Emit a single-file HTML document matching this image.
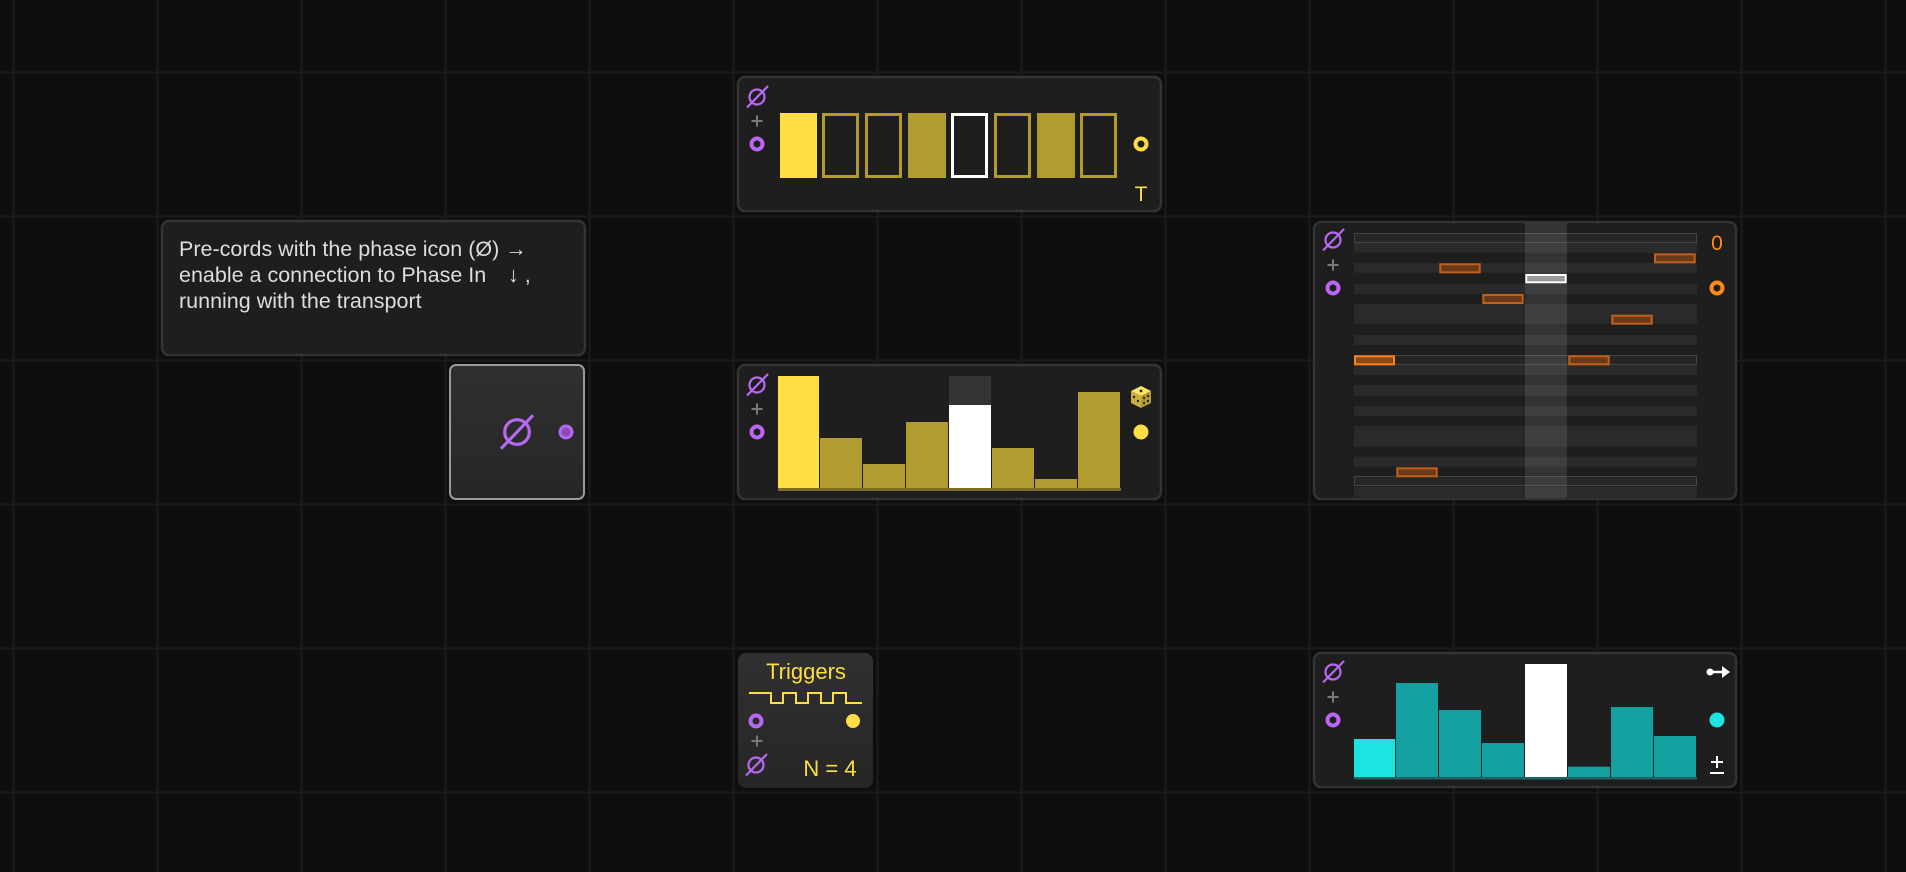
<!DOCTYPE html>
<html><head><meta charset="utf-8"><style>
html,body{margin:0;padding:0;background:#0e0e0e;width:1906px;height:872px;overflow:hidden}
svg{display:block}
</style></head><body>
<svg width="1906" height="872" viewBox="0 0 1906 872" xmlns="http://www.w3.org/2000/svg" font-family="Liberation Sans, sans-serif">
<defs>
<g id="phi"><circle cx="0" cy="0" r="7.5" fill="none" stroke="#b868f0" stroke-width="2.2"/><line x1="-10" y1="10.5" x2="11" y2="-11" stroke="#b868f0" stroke-width="2.2"/></g>
<g id="plus"><line x1="-5.5" y1="0" x2="5.5" y2="0" stroke="#7a7a7a" stroke-width="2"/><line x1="0" y1="-5.5" x2="0" y2="5.5" stroke="#7a7a7a" stroke-width="2"/></g>
<g id="ring"><circle cx="0" cy="0" r="5.5" fill="none" stroke="#b868f0" stroke-width="4"/></g>
<linearGradient id="pg" x1="0" y1="0" x2="0" y2="1"><stop offset="0" stop-color="#303030"/><stop offset="1" stop-color="#262626"/></linearGradient>
</defs>
<rect width="1906" height="872" fill="#0e0e0e"/>
<g stroke="#1c1c1c" stroke-width="2">
<line x1="13.5" y1="0" x2="13.5" y2="872"/><line x1="157.5" y1="0" x2="157.5" y2="872"/><line x1="301.5" y1="0" x2="301.5" y2="872"/><line x1="445.5" y1="0" x2="445.5" y2="872"/><line x1="589.5" y1="0" x2="589.5" y2="872"/><line x1="733.5" y1="0" x2="733.5" y2="872"/><line x1="877.5" y1="0" x2="877.5" y2="872"/><line x1="1021.5" y1="0" x2="1021.5" y2="872"/><line x1="1165.5" y1="0" x2="1165.5" y2="872"/><line x1="1309.5" y1="0" x2="1309.5" y2="872"/><line x1="1453.5" y1="0" x2="1453.5" y2="872"/><line x1="1597.5" y1="0" x2="1597.5" y2="872"/><line x1="1741.5" y1="0" x2="1741.5" y2="872"/><line x1="1885.5" y1="0" x2="1885.5" y2="872"/>
<line x1="0" y1="72.5" x2="1906" y2="72.5"/><line x1="0" y1="216.5" x2="1906" y2="216.5"/><line x1="0" y1="360.5" x2="1906" y2="360.5"/><line x1="0" y1="504.5" x2="1906" y2="504.5"/><line x1="0" y1="648.5" x2="1906" y2="648.5"/><line x1="0" y1="792.5" x2="1906" y2="792.5"/>
</g>

<!-- step sequencer -->
<rect x="738" y="77" width="423" height="134" rx="7" fill="#1e1e1e" stroke="#333" stroke-width="2.5"/>
<use href="#phi" x="757" y="97"/><use href="#plus" x="757" y="121"/><use href="#ring" x="757" y="144"/>
<rect x="780" y="113" width="37" height="65" fill="#ffdd44"/>
<rect x="823.5" y="114.5" width="34" height="62" fill="none" stroke="#b29c32" stroke-width="3"/>
<rect x="866.5" y="114.5" width="34" height="62" fill="none" stroke="#b29c32" stroke-width="3"/>
<rect x="908" y="113" width="38" height="65" fill="#b29c32"/>
<rect x="952.5" y="114.5" width="34" height="62" fill="none" stroke="#ffffff" stroke-width="3"/>
<rect x="995.5" y="114.5" width="34" height="62" fill="none" stroke="#b29c32" stroke-width="3"/>
<rect x="1037" y="113" width="38" height="65" fill="#b29c32"/>
<rect x="1081.5" y="114.5" width="34" height="62" fill="none" stroke="#b29c32" stroke-width="3"/>
<circle cx="1141" cy="144" r="5.5" fill="none" stroke="#ffdd44" stroke-width="4"/>
<text x="1141" y="201" font-size="21" fill="#ffdd44" text-anchor="middle">T</text>

<!-- text panel -->
<rect x="162" y="221" width="423" height="134" rx="7" fill="#1e1e1e" stroke="#333" stroke-width="2.5"/>
<text font-size="21.5" fill="#dddddd"><tspan x="179" y="256">Pre-cords with the phase icon  (Ø) →</tspan><tspan x="179" y="282">enable a connection to Phase In</tspan><tspan x="508" y="282">↓ ,</tspan><tspan x="179" y="308">running with the transport</tspan></text>

<!-- phase box -->
<rect x="450" y="365" width="134" height="134" rx="6" fill="url(#pg)" stroke="#9a9a9a" stroke-width="2"/>
<g transform="translate(517,432) scale(1.45)"><circle r="8.5" fill="none" stroke="#b868f0" stroke-width="2.2"/><line x1="-11" y1="11.5" x2="11" y2="-11.5" stroke="#b868f0" stroke-width="2.2"/></g>
<circle cx="566" cy="432" r="6" fill="#8a4ab8" stroke="#b868f0" stroke-width="3"/>

<!-- bar panel -->
<rect x="738" y="365" width="423" height="134" rx="7" fill="#1e1e1e" stroke="#333" stroke-width="2.5"/>
<use href="#phi" x="757" y="385"/><use href="#plus" x="757" y="409"/><use href="#ring" x="757" y="432"/>
<rect x="778" y="376" width="41" height="113" fill="#ffdd44"/>
<rect x="820" y="438" width="42" height="51" fill="#b29c32"/>
<rect x="863" y="464" width="42" height="25" fill="#b29c32"/>
<rect x="906" y="422" width="42" height="67" fill="#b29c32"/>
<rect x="949" y="376" width="42" height="29" fill="#333"/>
<rect x="949" y="405" width="42" height="84" fill="#ffffff"/>
<rect x="992" y="448" width="42" height="41" fill="#b29c32"/>
<rect x="1035" y="479" width="42" height="10" fill="#b29c32"/>
<rect x="1078" y="392" width="42" height="97" fill="#b29c32"/>
<rect x="778" y="488" width="343" height="3" fill="#7a6c2a"/>
<g transform="translate(1141,397)">
<polygon points="-10,-6 0,-11 10,-6 0,-1" fill="#ffe566"/>
<polygon points="-10,-6 0,-1 0,11 -10,6" fill="#c9b03a"/>
<polygon points="10,-6 0,-1 0,11 10,6" fill="#b29c32"/>
<circle cx="0" cy="-6" r="1.4" fill="#222"/><circle cx="-7" cy="0" r="1.2" fill="#222"/><circle cx="-3" cy="4" r="1.2" fill="#222"/><circle cx="3" cy="1" r="1.2" fill="#222"/><circle cx="7" cy="-1" r="1.2" fill="#222"/><circle cx="3" cy="6" r="1.2" fill="#222"/><circle cx="7" cy="4" r="1.2" fill="#222"/>
</g>
<circle cx="1141" cy="432" r="7.5" fill="#ffdd44"/>

<!-- piano roll -->
<rect x="1314" y="222" width="422" height="277" rx="7" fill="#1e1e1e" stroke="#333" stroke-width="2.5"/>
<g fill="#2a2a2a">
<rect x="1354" y="242.3" width="343" height="10.4"/>
<rect x="1354" y="262.7" width="343" height="10"/>
<rect x="1354" y="284" width="343" height="10"/>
<rect x="1354" y="304" width="343" height="20"/>
<rect x="1354" y="335" width="343" height="10"/>
<rect x="1354" y="365" width="343" height="10"/>
<rect x="1354" y="385" width="343" height="10.7"/>
<rect x="1354" y="406" width="343" height="10"/>
<rect x="1354" y="426" width="343" height="20.7"/>
<rect x="1354" y="456.7" width="343" height="10"/>
<rect x="1354" y="486.7" width="343" height="10.6"/>
</g>
<g fill="#262626" stroke="#444" stroke-width="1">
<rect x="1354.5" y="233.5" width="342" height="9"/>
<rect x="1354.5" y="355.5" width="342" height="9"/>
<rect x="1354.5" y="476.5" width="342" height="9"/>
</g>
<rect x="1525" y="223" width="42" height="275" fill="#ffffff" fill-opacity="0.1"/>
<g fill="#6a3a18" stroke="#c0601a" stroke-width="2">
<rect x="1440.3" y="264.3" width="39.4" height="8"/>
<rect x="1483.3" y="295" width="39.4" height="8"/>
<rect x="1655" y="254.3" width="39.7" height="8"/>
<rect x="1612.3" y="315.7" width="39.4" height="8"/>
<rect x="1569.3" y="356.3" width="39.4" height="8"/>
<rect x="1397.3" y="468.3" width="39.4" height="8"/>
</g>
<rect x="1355" y="356.3" width="39" height="8" fill="#8a4a18" stroke="#ff8020" stroke-width="2"/>
<rect x="1526.3" y="275" width="39.4" height="7.3" fill="#999" stroke="#ffffff" stroke-width="2"/>
<use href="#phi" x="1333" y="240"/><use href="#plus" x="1333" y="265"/><use href="#ring" x="1333" y="288"/>
<text x="1717" y="250" font-size="21" fill="#ff8a1a" text-anchor="middle">0</text>
<circle cx="1717" cy="288" r="5.5" fill="none" stroke="#ff8a1a" stroke-width="4"/>

<!-- triggers -->
<rect x="738" y="653" width="135" height="135" rx="8" fill="url(#pg)"/>
<text x="806" y="679" font-size="22" fill="#ffdd44" text-anchor="middle">Triggers</text>
<polyline points="749,693 771,693 771,703 783,703 783,693 796,693 796,703 808,703 808,693 821,693 821,703 833,703 833,693 846,693 846,703 862,703" fill="none" stroke="#ffdd44" stroke-width="2"/>
<use href="#ring" x="756" y="721"/>
<circle cx="853" cy="721" r="7" fill="#ffdd44"/>
<use href="#plus" x="757" y="741"/>
<use href="#phi" x="756" y="765"/>
<text x="830" y="776" font-size="22" fill="#ffdd44" text-anchor="middle">N = 4</text>

<!-- cyan bar panel -->
<rect x="1314" y="653" width="422" height="134" rx="7" fill="#1e1e1e" stroke="#333" stroke-width="2.5"/>
<use href="#phi" x="1333" y="672"/><use href="#plus" x="1333" y="697"/><use href="#ring" x="1333" y="720"/>
<rect x="1354" y="739" width="41" height="38" fill="#1de3e3"/>
<rect x="1396" y="683" width="42" height="94" fill="#13a0a0"/>
<rect x="1439" y="710" width="42" height="67" fill="#13a0a0"/>
<rect x="1482" y="743" width="42" height="34" fill="#13a0a0"/>
<rect x="1525" y="664" width="42" height="113" fill="#ffffff"/>
<rect x="1568" y="766.7" width="42" height="10.3" fill="#13a0a0"/>
<rect x="1611" y="707" width="42" height="70" fill="#13a0a0"/>
<rect x="1654" y="736" width="42" height="41" fill="#13a0a0"/>
<rect x="1354" y="777" width="343" height="2.5" fill="#1e6464"/>
<circle cx="1710" cy="672" r="3.5" fill="#fff"/>
<line x1="1710" y1="672" x2="1724" y2="672" stroke="#fff" stroke-width="2.5"/>
<polygon points="1722,666 1730,672 1722,678" fill="#fff"/>
<circle cx="1717" cy="720" r="7.5" fill="#1de3e3"/>
<g stroke="#fff" stroke-width="2"><line x1="1711" y1="762" x2="1723" y2="762"/><line x1="1717" y1="756" x2="1717" y2="768"/><line x1="1710" y1="773" x2="1724" y2="773"/></g>
</svg>
</body></html>
